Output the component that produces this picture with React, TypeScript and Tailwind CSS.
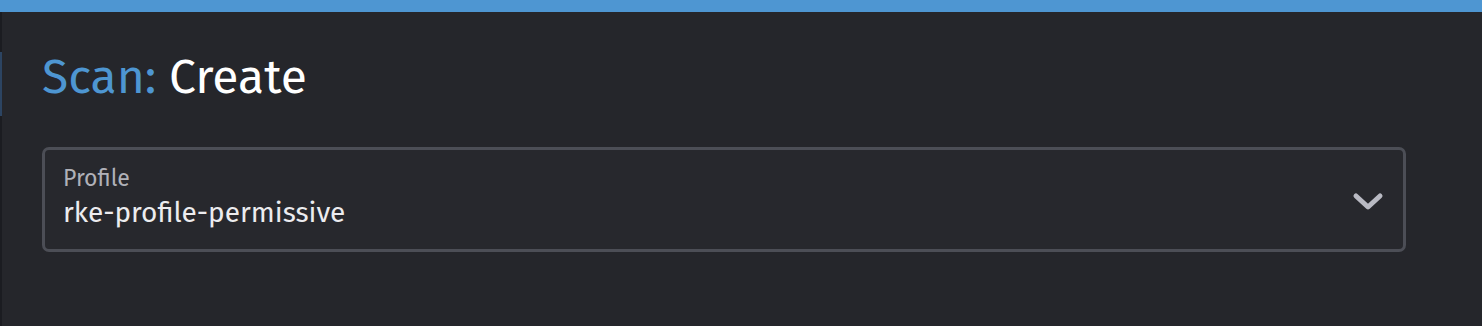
export default function App() {
  return (
    <div className="flex h-[326px] w-[1482px] flex-col bg-[#25262b] font-['Fira_Sans','Open_Sans',sans-serif]">
      <div className="h-[12px] bg-[#4e96d2]" />
      <div className="flex flex-1">
        <div className="flex w-[2px] flex-col">
          <div className="h-[40px] bg-[#1b1c21]" />
          <div className="h-[64px] bg-[#2c4462]" />
          <div className="flex-1 bg-[#1b1c21]" />
        </div>
        <div className="flex-1 pl-[40px] pr-[76px] pt-[37px]">
          <h1 className="text-[48px] leading-[56px] font-normal text-white">
            <span className="text-[#4e96d2]">Scan:</span> Create
          </h1>
          <div className="mt-[42px] flex h-[105px] justify-between rounded-[7px] border-[3px] border-[#4c4e56] bg-[#27282d] pl-[18px] pr-[19px] pt-[14px]">
            <div className="flex flex-col">
              <span className="text-[23px] leading-[28px] text-[#b0b1b8]">Profile</span>
              <span className="mt-[4px] text-[28px] leading-[34px] text-[#ececef]">rke-profile-permissive</span>
            </div>
            <svg width="32" height="20" viewBox="0 0 32 20" className="mt-[28px]">
              <path d="M4 4 L16 15 L28 4" fill="none" stroke="#b9bac3" strokeWidth="5" strokeLinecap="round" strokeLinejoin="round" />
            </svg>
          </div>
        </div>
      </div>
    </div>
  );
}
